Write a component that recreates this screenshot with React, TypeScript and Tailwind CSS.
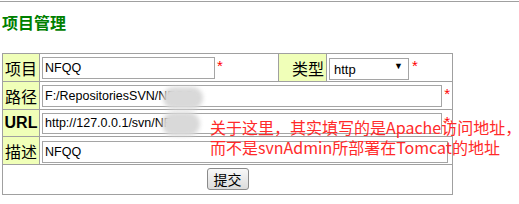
import React from "react";

const cjk = "font-['SimSun','Noto_Sans_CJK_SC',sans-serif]";

function Star() {
  return (
    <span className="ml-[2px] self-start mt-[1px] text-[15px] leading-none text-[#ff0000] font-['Liberation_Sans',sans-serif]">
      *
    </span>
  );
}

function Label({ children, bold }: { children: React.ReactNode; bold?: boolean }) {
  return (
    <td
      className={
        "border border-[#a0a0a0] bg-[#f0ffb8] p-0 text-center text-[16px] leading-[20px] text-black " +
        (bold ? "font-bold font-['Liberation_Sans',sans-serif]" : "font-['Noto_Sans_CJK_SC',sans-serif]")
      }
    >
      {children}
    </td>
  );
}

export default function App() {
  return (
    <div className="relative w-[519px] h-[204px] bg-white font-['Liberation_Sans',sans-serif]">
      <div className="mt-px h-px bg-[#a0a0a0]" />
      <h2 className="mt-[10px] ml-[2px] text-[16px] leading-[20px] font-bold text-[#008000] font-['Noto_Sans_CJK_SC',sans-serif]">
        项目管理
      </h2>

      <table className="mt-[21px] ml-[2px] w-[450px] table-fixed border-collapse">
        <colgroup>
          <col className="w-[37px]" />
          <col className="w-[239px]" />
          <col className="w-[48px]" />
          <col className="w-[126px]" />
        </colgroup>
        <tbody>
          <tr className="h-[28px]">
            <Label>项目</Label>
            <td className="border border-[#a0a0a0] px-[2px] py-0">
              <div className="flex items-center">
                <input
                  defaultValue="NFQQ"
                  className="w-[173px] h-[22px] border border-[#a5a5a5] px-[2px] text-[12.5px] text-black outline-none"
                />
                <Star />
              </div>
            </td>
            <td className="border border-[#a0a0a0] bg-[#f0ffb8] p-0 pr-[2px] text-right text-[16px] leading-[20px] text-black font-['Noto_Sans_CJK_SC',sans-serif]">
              类型
            </td>
            <td className="border border-[#a0a0a0] px-[2px] py-0">
              <div className="flex items-center">
                <div className="relative w-[80px] h-[22px]">
                  <select
                    defaultValue="http"
                    className="w-full h-full appearance-none border border-[#a5a5a5] bg-white pl-[4px] text-[13px] text-black outline-none"
                  >
                    <option value="http">http</option>
                    <option value="svn">svn</option>
                  </select>
                  <span className="pointer-events-none absolute right-[6px] top-[5px] text-[9px] leading-none text-black">
                    ▼
                  </span>
                </div>
                <span className="ml-[3px] self-start mt-[1px] text-[15px] leading-none text-[#ff0000]">*</span>
              </div>
            </td>
          </tr>
          <tr className="h-[28px]">
            <Label>路径</Label>
            <td colSpan={3} className="border border-[#a0a0a0] px-[2px] py-0">
              <div className="flex items-center">
                <input
                  defaultValue="F:/RepositoriesSVN/NFQQ"
                  className="w-[401px] h-[22px] border border-[#a5a5a5] px-[2px] text-[12.5px] text-black outline-none"
                />
                <Star />
              </div>
            </td>
          </tr>
          <tr className="h-[27px]">
            <Label bold>URL</Label>
            <td colSpan={3} className="border border-[#a0a0a0] px-[2px] py-0">
              <div className="flex items-center">
                <input
                  defaultValue="http://127.0.0.1/svn/NFQQ"
                  className="w-[401px] h-[21px] border border-[#a5a5a5] px-[2px] text-[12.5px] text-black outline-none"
                />
                <Star />
              </div>
            </td>
          </tr>
          <tr className="h-[28px]">
            <Label>描述</Label>
            <td colSpan={3} className="border border-[#a0a0a0] px-[2px] py-0">
              <input
                defaultValue="NFQQ"
                className="w-[406px] h-[22px] border border-[#a5a5a5] px-[2px] text-[12.5px] text-black outline-none"
              />
            </td>
          </tr>
          <tr className="h-[30px]">
            <td colSpan={4} className="border border-[#a0a0a0] p-0 text-center">
              <button
                className={
                  "inline-block w-[42px] h-[22px] rounded-[3px] border border-[#8a8a8a] bg-gradient-to-b from-[#f8f8f8] to-[#dcdcdc] text-[14px] leading-[18px] text-black " +
                  cjk
                }
              >
                提交
              </button>
            </td>
          </tr>
        </tbody>
      </table>

      {/* blurred-out parts of the screenshot */}
      <div className="absolute left-[163px] top-[86px] w-[40px] h-[22px] rounded-full bg-[#d9d9d9] blur-[2px]" />
      <div className="absolute left-[162px] top-[111px] w-[38px] h-[24px] rounded-full bg-[#d9d9d9] blur-[2px]" />

      {/* annotation */}
      <div className="absolute left-[210px] top-[116px] text-[16px] leading-[20px] text-[#ff2a2a] font-['Noto_Sans_CJK_SC',sans-serif] whitespace-nowrap">
        <div>关于这里，其实填写的是Apache访问地址，</div>
        <div>而不是svnAdmin所部署在Tomcat的地址</div>
      </div>
    </div>
  );
}
